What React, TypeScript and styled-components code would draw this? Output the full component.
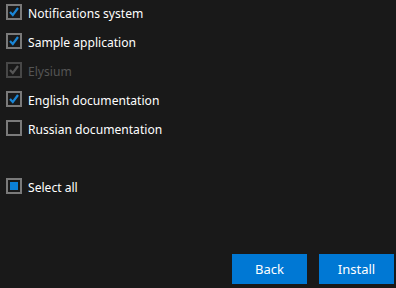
import React, { useState } from 'react';
import styled, { createGlobalStyle } from 'styled-components';

const GlobalStyle = createGlobalStyle`
  html, body {
    margin: 0;
    padding: 0;
    background: #191919;
  }
  body {
    font-family: "Noto Sans", "Open Sans", sans-serif;
  }
`;

const Page = styled.div`
  width: 396px;
  height: 288px;
  display: flex;
  flex-direction: column;
  background: #191919;
  box-sizing: border-box;
`;

const List = styled.div`
  flex: 1;
  display: flex;
  flex-direction: column;
  padding: 4px 0 0 6px;
`;

const Row = styled.label<{ $disabled?: boolean }>`
  display: flex;
  align-items: center;
  gap: 6px;
  height: 15px;
  margin-bottom: 14px;
  font-size: 12.1px;
  color: ${({ $disabled }) => ($disabled ? '#555555' : '#ffffff')};
  cursor: ${({ $disabled }) => ($disabled ? 'default' : 'pointer')};
  user-select: none;
`;

const Spacer = styled.div`
  height: 29px;
`;

const Box = styled.span<{ $disabled?: boolean }>`
  width: 16px;
  height: 16px;
  box-sizing: border-box;
  border: 2px solid ${({ $disabled }) => ($disabled ? '#474747' : '#7a7a7a')};
  display: flex;
  align-items: center;
  justify-content: center;
  flex-shrink: 0;
`;

const Mark = styled.span`
  width: 8px;
  height: 8px;
  background: #0a7fd6;
`;

const Label = styled.span`
  line-height: 15px;
  padding-top: 3px;
`;

const Footer = styled.div`
  display: flex;
  justify-content: flex-end;
  gap: 12px;
  padding: 0 2px 4px 0;
`;

const Button = styled.button`
  width: 75px;
  height: 30px;
  border: none;
  background: #0078d4;
  color: #ffffff;
  font-family: "Noto Sans", "Open Sans", sans-serif;
  font-size: 13px;
  padding: 0;
  cursor: pointer;
`;

const Check = ({ color }: { color: string }) => (
  <svg width="12" height="12" viewBox="0 0 12 12">
    <path d="M2 6 L4.8 9 L10 2" fill="none" stroke={color} strokeWidth="2.2" />
  </svg>
);

type Item = { label: string; checked: boolean; disabled?: boolean };

const initial: Item[] = [
  { label: 'Notifications system', checked: true },
  { label: 'Sample application', checked: true },
  { label: 'Elysium', checked: true, disabled: true },
  { label: 'English documentation', checked: true },
  { label: 'Russian documentation', checked: false },
];

export default function App() {
  const [items, setItems] = useState(initial);

  const toggle = (i: number) =>
    setItems(prev => prev.map((it, j) => (j === i && !it.disabled ? { ...it, checked: !it.checked } : it)));

  const allChecked = items.every(it => it.checked);
  const someChecked = items.some(it => it.checked);

  const toggleAll = () =>
    setItems(prev => prev.map(it => (it.disabled ? it : { ...it, checked: !allChecked })));

  return (
    <Page>
      <GlobalStyle />
      <List>
        {items.map((it, i) => (
          <Row key={it.label} $disabled={it.disabled} onClick={() => toggle(i)}>
            <Box $disabled={it.disabled}>
              {it.checked && <Check color={it.disabled ? '#555555' : '#1a86d6'} />}
            </Box>
            <Label>{it.label}</Label>
          </Row>
        ))}
        <Spacer />
        <Row onClick={toggleAll}>
          <Box>{allChecked ? <Check color="#1a86d6" /> : someChecked && <Mark />}</Box>
          <Label>Select all</Label>
        </Row>
      </List>
      <Footer>
        <Button>Back</Button>
        <Button>Install</Button>
      </Footer>
    </Page>
  );
}
